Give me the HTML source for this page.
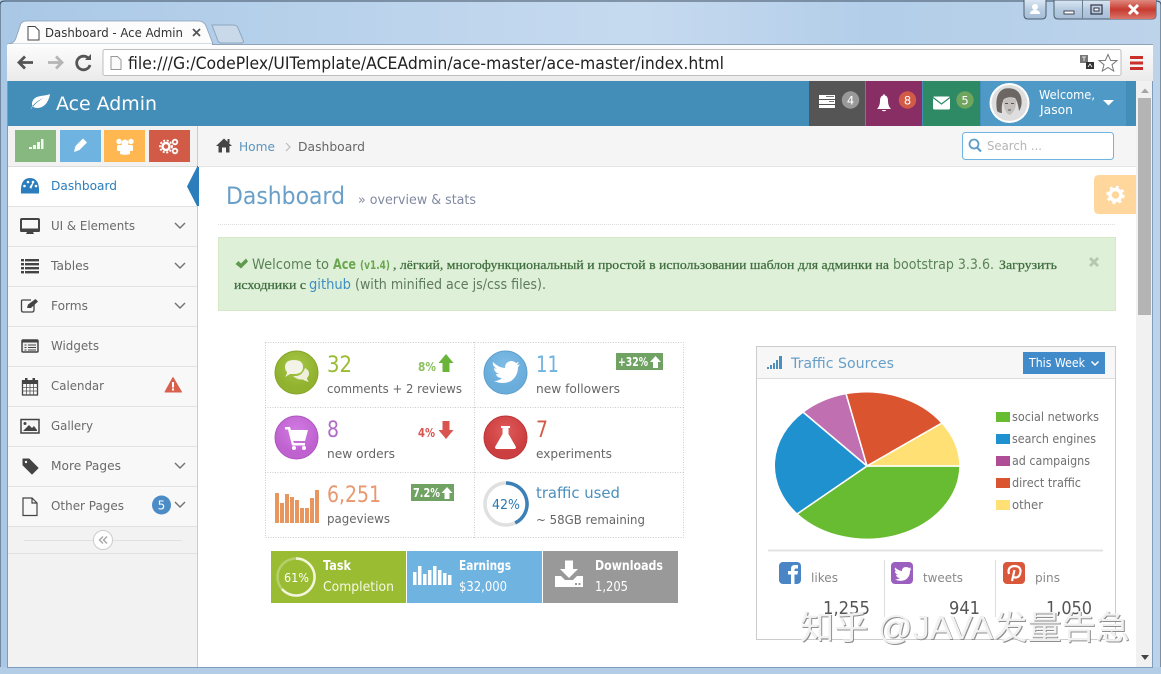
<!DOCTYPE html>
<html><head><meta charset="utf-8"><title>Dashboard - Ace Admin</title>
<style>
html,body{margin:0;padding:0;width:1161px;height:674px;overflow:hidden;background:#fff}
svg{display:block}
text{font-family:"DejaVu Sans","Liberation Sans",sans-serif;white-space:pre}
.s{font-family:"Liberation Serif","DejaVu Serif",serif;stroke:#3e6d3e;stroke-width:.25}
.nav{font-size:12.500px;fill:#6a6a6a}
.g{font-size:12.500px;fill:#666}
.w{fill:#fff}
.cn{font-family:"Liberation Sans","Noto Sans CJK SC",sans-serif}
</style></head><body>
<svg width="1161" height="674" viewBox="0 0 1161 674" xmlns="http://www.w3.org/2000/svg">
<defs>
<linearGradient id="sky" x1="0" y1="0" x2="1" y2="0"><stop offset="0" stop-color="#a9c8e6"/><stop offset=".35" stop-color="#bcd4ec"/><stop offset=".55" stop-color="#c6daef"/><stop offset=".75" stop-color="#b3cee9"/><stop offset="1" stop-color="#bcd3ea"/></linearGradient>
<linearGradient id="tb" x1="0" y1="0" x2="0" y2="1"><stop offset="0" stop-color="#fdfdfd"/><stop offset="1" stop-color="#e9e9e9"/></linearGradient>
<linearGradient id="cl" x1="0" y1="0" x2="0" y2="1"><stop offset="0" stop-color="#e08a80"/><stop offset=".5" stop-color="#c73a30"/><stop offset="1" stop-color="#d9756b"/></linearGradient>
<linearGradient id="btn" x1="0" y1="0" x2="0" y2="1"><stop offset="0" stop-color="#dbe7f3"/><stop offset=".5" stop-color="#b6cbe0"/><stop offset="1" stop-color="#a5bdd6"/></linearGradient>
<radialGradient id="g1" cy=".35"><stop offset="0" stop-color="#a6c748"/><stop offset="1" stop-color="#90b22e"/></radialGradient>
<radialGradient id="g2" cy=".35"><stop offset="0" stop-color="#7fbde6"/><stop offset="1" stop-color="#6aaddb"/></radialGradient>
<radialGradient id="g3" cy=".35"><stop offset="0" stop-color="#d27ce3"/><stop offset="1" stop-color="#bf62d0"/></radialGradient>
<radialGradient id="g4" cy=".35"><stop offset="0" stop-color="#e05a5a"/><stop offset="1" stop-color="#cc3f40"/></radialGradient>
<path id="chev" d="M-5 -3L0 2L5 -3" fill="none" stroke="#707070" stroke-width="1.400"/>
</defs>

<!-- window chrome -->
<rect width="1161" height="674" fill="url(#sky)"/>
<path d="M0 674V5Q0 1 5 1H1156Q1161 1 1161 5V674" fill="none" stroke="#3d4d5e" stroke-width="1"/>
<path d="M212 25L218 41Q219 43 222 43H240Q245 43 243 40L238 28Q237 25 233 25Z" fill="#c9d9ea" stroke="#8ea7c0"/>
<rect x="7" y="44" width="1146" height="40" fill="url(#tb)"/>
<rect x="212" y="44" width="941" height="1" fill="#8ea3b8"/>
<path d="M7 44Q14 44 16 38L20 26Q21 21 27 21H198Q204 21 206 26L213 44Z" fill="#fcfcfc" stroke="#8a9fb5" stroke-width=".8"/>
<rect x="8" y="44" width="204" height="3" fill="#fdfdfd"/>
<path d="M28 26.500h7l4 4v9.500h-11z" fill="#fff" stroke="#444"/>
<text x="45" y="37" font-size="12" fill="#333" textLength="138" lengthAdjust="spacingAndGlyphs">Dashboard - Ace Admin</text>
<path d="M193 29L200 36M200 29L193 36" stroke="#555" stroke-width="1.800"/>
<path d="M33 62.500H20M25 56.500L19 62.500L25 68.500" fill="none" stroke="#555" stroke-width="2.800"/>
<path d="M48 62.500H61M56 56.500L62 62.500L56 68.500" fill="none" stroke="#b5b5b5" stroke-width="2.800"/>
<path d="M89 59A6.800 6.800 0 1 0 90 65" fill="none" stroke="#555" stroke-width="2.800"/>
<path d="M85 60H91V54Z" fill="#555"/>
<rect x="103" y="49.500" width="1018" height="26" rx="2" fill="#fff" stroke="#bdbdbd"/>
<path d="M111 56.500h6.500l3.500 3.500v9.500h-10z" fill="#fafafa" stroke="#999"/>
<text x="128" y="69" font-size="16.500" fill="#222" textLength="596" lengthAdjust="spacingAndGlyphs">file:///G:/CodePlex/UITemplate/ACEAdmin/ace-master/ace-master/index.html</text>
<rect x="1080" y="55" width="8" height="8" fill="#777"/><rect x="1086" y="62" width="8" height="7" fill="#333"/>
<path d="M1082 57h4M1084 57v4" stroke="#fff" stroke-width=".8"/><path d="M1088 67l2-3 2 3" fill="none" stroke="#fff" stroke-width=".8"/>
<path d="M1108 54.500l2.700 6h6.300l-5 4.200 1.700 6.300-5.700-3.500-5.700 3.500 1.700-6.300-5-4.200h6.300z" fill="#fff" stroke="#777"/>
<rect x="1130" y="56" width="13" height="3" fill="#c9302c"/><rect x="1130" y="61.500" width="13" height="3" fill="#c9302c"/><rect x="1130" y="67" width="13" height="3" fill="#c9302c"/>
<path d="M1024 0V15Q1024 19 1028 19H1042Q1046 19 1046 15V0" fill="url(#btn)" stroke="#4c5d6e"/>
<circle cx="1035" cy="7" r="3" fill="#fff"/><path d="M1030 14Q1030 10 1035 10Q1040 10 1040 14Z" fill="#fff"/>
<path d="M1054 0V15Q1054 19 1058 19H1152Q1156 19 1156 15V0Z" fill="url(#btn)" stroke="#4c5d6e"/>
<path d="M1110 0H1156V15Q1156 19 1152 19H1110Z" fill="url(#cl)"/>
<line x1="1082.500" y1="0" x2="1082.500" y2="19" stroke="#6b7f93"/>
<rect x="1064" y="11" width="10" height="3" fill="#fff" stroke="#445"/>
<rect x="1091" y="5" width="11" height="9" fill="none" stroke="#334" stroke-width="1.200"/><rect x="1094" y="8" width="5" height="3" fill="#fff" stroke="#334"/>
<path d="M1129 5L1138 14M1138 5L1129 14" stroke="#fff" stroke-width="3"/>

<!-- page -->
<rect x="8" y="81" width="1145" height="586" fill="#fff"/>
<rect x="7" y="81" width="1" height="586" fill="#7e9dbd"/>
<rect x="1152" y="81" width="1" height="586" fill="#7e9dbd"/>
<rect x="0" y="667" width="1161" height="7" fill="#b3cde6"/>
<rect x="7" y="667" width="1146" height="1" fill="#7e9dbd"/>

<!-- navbar -->
<rect x="8" y="81" width="1128" height="45" fill="#438eb9"/>
<path d="M30 110C33 104 38 100 44 98C38 101 35 104 33 107C40 110 48 106 50 94C44 97 34 94 32 103C32 105 32 106 33 106Z" fill="#fff"/>
<text x="56" y="110" font-size="19" class="w" textLength="101" lengthAdjust="spacingAndGlyphs">Ace Admin</text>
<rect x="809" y="81" width="56" height="45" fill="#555"/>
<rect x="866" y="81" width="56" height="45" fill="#892e65"/>
<rect x="923" y="81" width="57" height="45" fill="#2e8965"/>
<rect x="981" y="81" width="145" height="45" fill="#4f99c6"/>
<rect x="819" y="95" width="16" height="4" fill="#fff"/><rect x="819" y="100" width="16" height="4" fill="#fff"/><rect x="819" y="105" width="16" height="3" fill="#fff"/>
<rect x="826" y="96" width="8" height="1" fill="#777"/><rect x="829" y="101" width="5" height="1" fill="#777"/>
<circle cx="850.500" cy="100" r="8.700" fill="#999"/><text x="850.500" y="104.500" font-size="11.500" text-anchor="middle" class="w">4</text>
<path d="M877 109Q880 106 880 101Q880 96 883 95.500V94.500H885V95.500Q888 96 888 101Q888 106 891 109ZM881.500 110H886.500Q884 112.500 881.500 110Z" fill="#fff"/>
<circle cx="907.500" cy="100" r="8.700" fill="#d15b47"/><text x="907.500" y="104.500" font-size="11.500" text-anchor="middle" class="w">8</text>
<rect x="933" y="96.500" width="17" height="13" rx="1.500" fill="#fff"/><path d="M933 97.500L941.500 104L950 97.500" fill="none" stroke="#2e8965" stroke-width="1.200"/>
<circle cx="965" cy="100" r="8.700" fill="#6fa55f"/><text x="965" y="104.500" font-size="11.500" text-anchor="middle" class="w">5</text>
<circle cx="1009.500" cy="103" r="20" fill="#fff"/><circle cx="1009.500" cy="103" r="18" fill="#dedede"/>
<path d="M997 111Q994 92 1005 88.500Q1018 87 1021 97Q1023 105 1019 111Q1018 102 1015 98Q1009 96 1004 99Q1001 104 1002 113Q999 113 997 111Z" fill="#6c6763"/>
<path d="M1003 100Q1009 96 1016 99Q1017 110 1010 115Q1004 113 1003 100Z" fill="#c4c0bd"/>
<path d="M1005 103.500h3M1011 103.500h3M1008 110h3" stroke="#555" stroke-width="1"/>
<text x="1039" y="99" font-size="12" fill="#fff" textLength="56" lengthAdjust="spacingAndGlyphs">Welcome,</text>
<text x="1040" y="114" font-size="12" fill="#fff" textLength="33" lengthAdjust="spacingAndGlyphs">Jason</text>
<path d="M1103 100H1114L1108.500 105.500Z" fill="#fff"/>

<!-- scrollbar -->
<rect x="1136" y="81" width="16" height="586" fill="#f1f1f1"/>
<path d="M1141 93L1145 88.500L1149 93Z" fill="#a5a5a5"/>
<rect x="1138" y="98" width="13" height="217" fill="#b4b4b4"/>
<path d="M1141 655L1145 660L1149 655Z" fill="#444"/>

<!-- sidebar -->
<rect x="8" y="126" width="189" height="541" fill="#f2f2f2"/>
<rect x="8" y="207" width="189" height="319" fill="#f8f8f8"/>
<rect x="197" y="126" width="1" height="541" fill="#ccc"/>
<rect x="15" y="130" width="41" height="32" fill="#87b87f"/>
<rect x="60" y="130" width="41" height="32" fill="#6fb3e0"/>
<rect x="104" y="130" width="41" height="32" fill="#ffb752"/>
<rect x="149" y="130" width="41" height="32" fill="#d15b47"/>
<path d="M29 147h3v2h-3zM33 145h3v4h-3zM37 142h3v7h-3zM41 139h2.500v10h-2.500z" fill="#fff" opacity=".9"/>
<path d="M74 152L75.500 146L83 138.500L87 142.500L79.500 150Z" fill="#fff"/>
<circle cx="125" cy="143" r="3.500" fill="#fff"/><circle cx="119" cy="141.500" r="2.700" fill="#fff"/><circle cx="131" cy="141.500" r="2.700" fill="#fff"/><path d="M117 150V146Q117 145 119 145H131Q133 145 133 146V150Q133 151 131 151H119Q117 151 117 150Z" fill="#fff"/><path d="M120 154V147H130V154Q125 155.500 120 154Z" fill="#fff"/>
<circle cx="166" cy="146.500" r="3.500" fill="none" stroke="#fff" stroke-width="2.500"/><circle cx="166" cy="146.500" r="6" fill="none" stroke="#fff" stroke-width="1.800" stroke-dasharray="2 1.600"/><circle cx="175" cy="142" r="2.300" fill="none" stroke="#fff" stroke-width="1.800"/><circle cx="175" cy="151" r="2.300" fill="none" stroke="#fff" stroke-width="1.800"/>
<rect x="8" y="166" width="189" height="1" fill="#ddd"/>
<rect x="8" y="167" width="190" height="39" fill="#fff"/>
<rect x="197" y="166" width="2" height="40" fill="#2b7dbc"/>
<path d="M197 167L187 186.500L197 206Z" fill="#2b7dbc"/>
<path d="M21 193.500Q20 178 30 178Q40 178 39 193.500Z" fill="#2b7dbc"/>
<circle cx="24.500" cy="186" r="1.300" fill="#fff"/><circle cx="28" cy="182" r="1.300" fill="#fff"/><circle cx="33" cy="182" r="1.300" fill="#fff"/><circle cx="36" cy="186" r="1.300" fill="#fff"/><path d="M30 187L33 183L31 188Z" fill="#fff" stroke="#fff"/>
<text x="51" y="190" font-size="12.500" fill="#2b7dbc" textLength="66" lengthAdjust="spacingAndGlyphs">Dashboard</text>
<g fill="#e2e2e2"><rect x="8" y="206" width="189" height="1"/><rect x="8" y="246" width="189" height="1"/><rect x="8" y="286" width="189" height="1"/><rect x="8" y="326" width="189" height="1"/><rect x="8" y="366" width="189" height="1"/><rect x="8" y="406" width="189" height="1"/><rect x="8" y="446" width="189" height="1"/><rect x="8" y="486" width="189" height="1"/><rect x="8" y="526" width="189" height="1"/><rect x="8" y="553" width="189" height="1"/></g>
<text x="51" y="230" class="nav" textLength="84" lengthAdjust="spacingAndGlyphs">UI &amp; Elements</text>
<text x="51" y="270" class="nav" textLength="38" lengthAdjust="spacingAndGlyphs">Tables</text>
<text x="51" y="310" class="nav" textLength="37" lengthAdjust="spacingAndGlyphs">Forms</text>
<text x="51" y="350" class="nav" textLength="48" lengthAdjust="spacingAndGlyphs">Widgets</text>
<text x="51" y="390" class="nav" textLength="53" lengthAdjust="spacingAndGlyphs">Calendar</text>
<text x="51" y="430" class="nav" textLength="42" lengthAdjust="spacingAndGlyphs">Gallery</text>
<text x="51" y="470" class="nav" textLength="70" lengthAdjust="spacingAndGlyphs">More Pages</text>
<text x="51" y="510" class="nav" textLength="73" lengthAdjust="spacingAndGlyphs">Other Pages</text>
<use href="#chev" x="180" y="226"/><use href="#chev" x="180" y="266"/><use href="#chev" x="180" y="306"/><use href="#chev" x="180" y="466"/><use href="#chev" x="180" y="505"/>
<!-- desktop -->
<path d="M22 218H38Q40 218 40 220V231Q40 232 38 232H22Q20 232 20 231V220Q20 218 22 218Z" fill="#444"/><rect x="22" y="220" width="16" height="8.500" fill="#f8f8f8"/><path d="M27 232H33L34 234H26Z" fill="#444"/>
<!-- tables -->
<g fill="#444"><rect x="21" y="259" width="3" height="2.400"/><rect x="25" y="259" width="14" height="2.400"/><rect x="21" y="263" width="3" height="2.400"/><rect x="25" y="263" width="14" height="2.400"/><rect x="21" y="267" width="3" height="2.400"/><rect x="25" y="267" width="14" height="2.400"/><rect x="21" y="271" width="3" height="2.400"/><rect x="25" y="271" width="14" height="2.400"/></g>
<!-- forms -->
<path d="M34 304V310Q34 312 32 312H23Q21.500 312 21.500 310V301Q21.500 300 23 300H31" fill="none" stroke="#444" stroke-width="1.300"/><path d="M27 308L28 304.500L35.500 299L38 301.500L31 308Z" fill="#444"/>
<!-- widgets -->
<rect x="22" y="340" width="16" height="12" rx="1" fill="#eee" stroke="#444" stroke-width="1.500"/><rect x="22" y="340" width="16" height="2.500" fill="#444"/><path d="M24.500 345h2M24.500 347.500h2M24.500 350h2M28 345h8M28 347.500h8M28 350h8" stroke="#444"/>
<!-- calendar -->
<rect x="22.500" y="381" width="15" height="14" fill="#f8f8f8" stroke="#444" stroke-width="1.300"/><rect x="22" y="380" width="16" height="4" fill="#444"/><rect x="25" y="378" width="2.500" height="4" fill="#444"/><rect x="32.500" y="378" width="2.500" height="4" fill="#444"/><path d="M22 387.500H38M22 391H38M26.500 384V395M30 384V395M33.500 384V395" stroke="#555" stroke-width=".8"/>
<path d="M173 377.500L181.500 392H165Z" fill="#d9604c" stroke="#d9604c" stroke-linejoin="round"/><rect x="172" y="382" width="2" height="5.500" fill="#fff"/><rect x="172" y="388.500" width="2" height="2" fill="#fff"/>
<!-- gallery -->
<rect x="21" y="419.500" width="18" height="13.500" fill="#f5f5f5" stroke="#444" stroke-width="1.500"/><path d="M23 431L29 425L32 428L34 426L37 430V431Z" fill="#444"/><circle cx="25" cy="423.500" r="1.500" fill="#444"/>
<!-- tag -->
<path d="M23 459H29L38 468L32 474L23 465Z" fill="#444" stroke="#444" stroke-linejoin="round"/><circle cx="26" cy="462" r="1.200" fill="#f8f8f8"/>
<!-- page -->
<path d="M23 498h9l5 5v12.500h-14z" fill="#f8f8f8" stroke="#444" stroke-width="1.200"/><path d="M32 498v5h5" fill="none" stroke="#444" stroke-width="1.200"/>
<circle cx="161.500" cy="505" r="9.500" fill="#4b8bc6"/><text x="161.500" y="509.500" font-size="12" class="w" text-anchor="middle">5</text>
<rect x="24" y="540" width="158" height="1" fill="#e0e0e0"/>
<circle cx="103" cy="540" r="9.500" fill="#fff" stroke="#ccc"/>
<path d="M103 536.500L99.500 540L103 543.500M107 536.500L103.500 540L107 543.500" fill="none" stroke="#aaa" stroke-width="1.500"/>

<!-- breadcrumbs -->
<rect x="198" y="126" width="938" height="40" fill="#f5f5f5"/>
<rect x="198" y="166" width="938" height="1" fill="#e5e5e5"/>
<path d="M216 146L224 138.500L232 146H229.500V152.500H226V147.500H222V152.500H218.500V146Z" fill="#444"/><rect x="227.500" y="139" width="2" height="4" fill="#444"/>
<text x="239" y="151" font-size="12.500" fill="#5c94bd" textLength="36" lengthAdjust="spacingAndGlyphs">Home</text>
<path d="M286 143L290 147L286 151" fill="none" stroke="#bbb" stroke-width="1.200"/>
<text x="298" y="151" font-size="12.500" fill="#666" textLength="67" lengthAdjust="spacingAndGlyphs">Dashboard</text>
<rect x="962.500" y="132.500" width="151" height="27" rx="3" fill="#fff" stroke="#6fb3e0"/>
<circle cx="974" cy="144" r="4.500" fill="none" stroke="#5f9ec9" stroke-width="1.800"/><path d="M977 147.500L981 151.500" stroke="#5f9ec9" stroke-width="2.200"/>
<text x="987" y="150" font-size="12" fill="#b5b5b5" textLength="55" lengthAdjust="spacingAndGlyphs">Search ...</text>

<!-- settings -->
<path d="M1136 175H1099Q1094 175 1094 180V209Q1094 214 1099 214H1136Z" fill="#ffd69c"/>
<circle cx="1115.500" cy="195" r="5.500" fill="none" stroke="#fff" stroke-width="3.500"/><circle cx="1115.500" cy="195" r="8" fill="none" stroke="#fff" stroke-width="2.500" stroke-dasharray="3 3.300"/>

<!-- header -->
<text x="226" y="204" font-size="24" fill="#6aa0c8" textLength="119" lengthAdjust="spacingAndGlyphs">Dashboard</text>
<text x="358" y="204" font-size="13.500" fill="#8089a0" textLength="118" lengthAdjust="spacingAndGlyphs">» overview &amp; stats</text>
<line x1="218" y1="224.500" x2="1116" y2="224.500" stroke="#ddd" stroke-dasharray="1 1"/>

<!-- alert -->
<rect x="218.500" y="237.500" width="897" height="73" fill="#dff0d8" stroke="#d6e9c6"/>
<path d="M235.500 264L238.500 261L241 263.500L246 258.500L248 261.500L241 268.500Z" fill="#5f9a4f"/>
<g font-size="14" fill="#5a8257">
<text x="252" y="269" textLength="77" lengthAdjust="spacingAndGlyphs">Welcome to</text>
<text x="333" y="269" font-weight="bold" font-size="14" fill="#69a64f" textLength="23" lengthAdjust="spacingAndGlyphs">Ace</text>
<text x="360" y="269" font-size="11.500" font-weight="bold" fill="#69a64f" textLength="30" lengthAdjust="spacingAndGlyphs">(v1.4)</text>
<text x="893" y="269" textLength="101" lengthAdjust="spacingAndGlyphs">bootstrap 3.3.6.</text>
<text x="355" y="289" fill="#5e7a5c" textLength="191" lengthAdjust="spacingAndGlyphs">(with minified ace js/css files).</text>
<text x="309" y="289" fill="#3f8ec2" textLength="42" lengthAdjust="spacingAndGlyphs">github</text>
</g>
<text x="393" y="269" class="s" font-size="13" fill="#3e6d3e" textLength="496" lengthAdjust="spacingAndGlyphs">, лёгкий, многофункциональный и простой в использовании шаблон для админки на</text>
<text x="999" y="269" class="s" font-size="13" fill="#3e6d3e" textLength="58" lengthAdjust="spacingAndGlyphs">Загрузить</text>
<text x="234" y="289" class="s" font-size="13" fill="#3e6d3e" textLength="72" lengthAdjust="spacingAndGlyphs">исходники с</text>
<path d="M1090 258L1098 266M1098 258L1090 266" stroke="#b4c8ab" stroke-width="2.800"/>

<!-- infoboxes -->
<g fill="none" stroke="#ccc" stroke-dasharray="1 1.500">
<rect x="265.500" y="342.500" width="418" height="195"/>
<line x1="474.500" y1="342" x2="474.500" y2="538"/>
<line x1="265" y1="407.500" x2="684" y2="407.500"/>
<line x1="265" y1="472.500" x2="684" y2="472.500"/>
</g>
<circle cx="296.500" cy="372.500" r="21.500" fill="url(#g1)" stroke="#86a52b"/>
<path d="M285 367Q285 360 294 360Q303 360 303 367Q303 374 294 374Q292 374 290 374L285 377Q287 374 287 372Q285 370 285 367Z" fill="#f3f3e8"/>
<path d="M305 368Q309 370 309 373.500Q309 376 307 378Q307 380 309 382Q305 381 303 379.500Q297 380 293 376Q302 377 305 368Z" fill="#eef0dc"/>
<circle cx="505.500" cy="372.500" r="21.500" fill="url(#g2)" stroke="#5f9fcd"/>
<path d="M493 362Q499 368 505 368Q505 362 511 361Q514 361 516 363L519 362L517 365L520 364.500L518 367Q518 376 511 381Q503 385 494 381Q499 381 502 378Q497 378 496 374H499Q494 372 494 368L497 369Q492 366 493 362Z" fill="#fff"/>
<circle cx="296.500" cy="437.500" r="21.500" fill="url(#g3)" stroke="#ae56bf"/>
<path d="M285 427H290L291 430H308L305 441H293L294 443H305V445.500H292L288 429.500H285Z" fill="#fff"/><circle cx="294" cy="448" r="2" fill="#fff"/><circle cx="304" cy="448" r="2" fill="#fff"/>
<circle cx="505.500" cy="437.500" r="21.500" fill="url(#g4)" stroke="#bb3536"/>
<path d="M501 426H510V428H508.500V434L516 447Q516 449 514 449H497Q495 449 495 447L502.500 434V428H501Z" fill="#fff"/>

<g font-size="22">
<text x="327" y="372" fill="#9abc32" textLength="25" lengthAdjust="spacingAndGlyphs">32</text>
<text x="536" y="372" fill="#6fb3e0" textLength="23" lengthAdjust="spacingAndGlyphs">11</text>
<text x="327" y="437" fill="#b06cc7" textLength="12" lengthAdjust="spacingAndGlyphs">8</text>
<text x="536" y="437" fill="#d15b47" textLength="12" lengthAdjust="spacingAndGlyphs">7</text>
<text x="327" y="502" fill="#e9976f" textLength="54" lengthAdjust="spacingAndGlyphs">6,251</text>
</g>
<text x="327" y="393" class="g" textLength="135" lengthAdjust="spacingAndGlyphs">comments + 2 reviews</text>
<text x="536" y="393" class="g" textLength="84" lengthAdjust="spacingAndGlyphs">new followers</text>
<text x="327" y="458" class="g" textLength="68" lengthAdjust="spacingAndGlyphs">new orders</text>
<text x="536" y="458" class="g" textLength="76" lengthAdjust="spacingAndGlyphs">experiments</text>
<text x="327" y="523" class="g" textLength="63" lengthAdjust="spacingAndGlyphs">pageviews</text>
<text x="536" y="524" class="g" textLength="109" lengthAdjust="spacingAndGlyphs">~ 58GB remaining</text>
<text x="536" y="498" font-size="15.500" fill="#4c8fbd" textLength="84" lengthAdjust="spacingAndGlyphs">traffic used</text>
<text x="418" y="371" font-size="12.500" font-weight="bold" fill="#8ac05f" textLength="18" lengthAdjust="spacingAndGlyphs">8%</text>
<path d="M446 354L453.500 363H449.500V372H442.500V363H438.500Z" fill="#69b53a"/>
<text x="418" y="437" font-size="12.500" font-weight="bold" fill="#d9534f" textLength="17" lengthAdjust="spacingAndGlyphs">4%</text>
<path d="M446 439L453.500 430H449.500V421H442.500V430H438.500Z" fill="#d9534f"/>
<rect x="616" y="353" width="47" height="17" fill="#6fa263"/>
<text x="618" y="366" font-size="12" font-weight="bold" class="w" textLength="30" lengthAdjust="spacingAndGlyphs">+32%</text>
<path d="M655.500 356L661 362H658V368H653V362H650Z" fill="#fff"/>
<rect x="411" y="484" width="43" height="17" fill="#6fa263"/>
<text x="413" y="497" font-size="12" font-weight="bold" class="w" textLength="27" lengthAdjust="spacingAndGlyphs">7.2%</text>
<path d="M447 487L452.500 493H449.500V499H444.500V493H441.500Z" fill="#fff"/>
<g fill="#e8955e">
<rect x="275" y="493" width="4" height="30"/><rect x="280" y="503" width="4" height="20"/><rect x="285" y="494" width="4" height="29"/><rect x="290" y="497" width="4" height="26"/><rect x="295" y="500" width="4" height="23"/><rect x="300" y="508" width="4" height="15"/><rect x="305" y="508" width="4" height="15"/><rect x="310" y="498" width="4" height="25"/><rect x="315" y="490" width="4" height="33"/>
</g>
<circle cx="506" cy="504" r="21" fill="none" stroke="#e0e0e0" stroke-width="3.500"/>
<path d="M506 483A21 21 0 0 1 515.200 522.900" fill="none" stroke="#3c80b8" stroke-width="3.500"/>
<text x="506" y="509" font-size="13.500" fill="#2a7ab0" text-anchor="middle" textLength="28" lengthAdjust="spacingAndGlyphs">42%</text>

<!-- big buttons -->
<rect x="271" y="551" width="135" height="52" fill="#9abc32"/>
<rect x="407" y="551" width="135" height="52" fill="#6fb3e0"/>
<rect x="543" y="551" width="135" height="52" fill="#999"/>
<circle cx="296" cy="577" r="18.500" fill="none" stroke="#b5cf6a" stroke-width="2.500"/>
<path d="M296 558.500A18.500 18.500 0 1 1 282 589" fill="none" stroke="#f3f6dd" stroke-width="2.500"/>
<text x="284" y="582" font-size="12" class="w" textLength="25" lengthAdjust="spacingAndGlyphs">61%</text>
<text x="323" y="570" font-size="13.500" font-weight="bold" class="w" textLength="28" lengthAdjust="spacingAndGlyphs">Task</text>
<text x="323" y="591" font-size="13" fill="#f5f8e5" textLength="71" lengthAdjust="spacingAndGlyphs">Completion</text>
<g fill="#fff">
<rect x="413" y="572" width="3.500" height="13"/><rect x="418" y="566" width="3.500" height="19"/><rect x="423" y="574" width="3.500" height="11"/><rect x="428" y="570" width="3.500" height="15"/><rect x="433" y="566" width="3.500" height="19"/><rect x="438" y="570" width="3.500" height="15"/><rect x="443" y="573" width="3.500" height="12"/><rect x="448" y="575" width="3.500" height="10"/>
</g>
<text x="459" y="570" font-size="13.500" font-weight="bold" class="w" textLength="52" lengthAdjust="spacingAndGlyphs">Earnings</text>
<text x="459" y="591" font-size="13" class="w" textLength="48" lengthAdjust="spacingAndGlyphs">$32,000</text>
<path d="M565 560.500H573V569H578L569 578L560 569H565Z" fill="#fff"/>
<path d="M555 576H561L565 580H573L577 576H583V587H555Z" fill="#fff"/>
<rect x="575" y="583" width="2" height="2" fill="#999"/><rect x="578.500" y="583" width="2" height="2" fill="#999"/>
<text x="595" y="570" font-size="13.500" font-weight="bold" class="w" textLength="68" lengthAdjust="spacingAndGlyphs">Downloads</text>
<text x="595" y="591" font-size="13" class="w" textLength="33" lengthAdjust="spacingAndGlyphs">1,205</text>

<!-- widget -->
<rect x="756.500" y="346.500" width="359" height="293" fill="#fff" stroke="#ccc"/>
<rect x="757" y="347" width="358" height="31" fill="#f7f7f7"/>
<rect x="757" y="378" width="358" height="1" fill="#ddd"/>
<g fill="#4c8fbd"><rect x="767" y="367" width="2" height="2"/><rect x="770" y="365" width="2" height="4"/><rect x="773" y="363" width="2" height="6"/><rect x="776" y="360" width="2" height="9"/><rect x="779" y="356" width="3" height="13"/></g>
<text x="791" y="368" font-size="14.500" fill="#669fc7" textLength="103" lengthAdjust="spacingAndGlyphs">Traffic Sources</text>
<rect x="1023" y="352" width="82" height="22" fill="#428bca"/>
<text x="1029" y="367" font-size="12.500" class="w" textLength="56" lengthAdjust="spacingAndGlyphs">This Week</text>
<path d="M1091.500 361.500L1095 365L1098.500 361.500" fill="none" stroke="#fff" stroke-width="1.500"/>
<g stroke="#fff" stroke-width="1.500" stroke-linejoin="round">
<path d="M867 466L960 466A93 74 0 0 1 797 514Z" fill="#68bc31"/>
<path d="M867 466L797 514A93 74 0 0 1 803 412Z" fill="#2091cf"/>
<path d="M867 466L803 412A93 74 0 0 1 846 393.500Z" fill="#c06fb0"/>
<path d="M867 466L846 393.500A93 74 0 0 1 942 423Z" fill="#da5430"/>
<path d="M867 466L942 423A93 74 0 0 1 960 466Z" fill="#fee074"/>
</g>
<rect x="996" y="412" width="14" height="10" fill="#68bc31"/>
<rect x="996" y="434" width="14" height="10" fill="#2091cf"/>
<rect x="996" y="456" width="14" height="10" fill="#af4e96"/>
<rect x="996" y="478" width="14" height="10" fill="#da5430"/>
<rect x="996" y="500" width="14" height="10" fill="#fee074"/>
<text x="1012" y="421" font-size="12" fill="#707070" textLength="87" lengthAdjust="spacingAndGlyphs">social networks</text>
<text x="1012" y="443" font-size="12" fill="#707070" textLength="84" lengthAdjust="spacingAndGlyphs">search engines</text>
<text x="1012" y="465" font-size="12" fill="#707070" textLength="78" lengthAdjust="spacingAndGlyphs">ad campaigns</text>
<text x="1012" y="487" font-size="12" fill="#707070" textLength="69" lengthAdjust="spacingAndGlyphs">direct traffic</text>
<text x="1012" y="509" font-size="12" fill="#707070" textLength="31" lengthAdjust="spacingAndGlyphs">other</text>
<rect x="768" y="549.500" width="335" height="2" fill="#e3e3e3"/>
<rect x="884" y="560" width="1" height="57" fill="#ddd"/><rect x="995" y="560" width="1" height="57" fill="#ddd"/>
<rect x="779" y="562" width="22" height="22" rx="4" fill="#4a85c5"/>
<path d="M791 584V574.500H788V571H791V568.500Q791 565 795 565H798V568.500H796Q794.500 568.500 794.500 570V571H798L797.500 574.500H794.500V584Z" fill="#fff"/>
<rect x="891" y="562" width="22" height="22" rx="4" fill="#9b5fc0"/>
<path d="M895 567.500Q899 571 902 571Q902 567 906 567Q908 567 909 568L911 567.500L910 569.500L911.500 569L910 571Q910 577 905 580Q900 582 895 579.500Q898 579.500 900 578Q897 578 896 575H898Q895 574 895 571L897 571.500Q894 570 895 567.500Z" fill="#fff"/>
<rect x="1003" y="562" width="22" height="22" rx="4" fill="#d9583b"/>
<path d="M1012 581L1014.500 570M1009 574Q1007 567 1014 566Q1021 566 1020.500 572Q1019.500 578 1015 577.500Q1013 577 1013 576" fill="none" stroke="#fff" stroke-width="2.200"/>
<text x="811" y="582" font-size="12.500" fill="#888" textLength="27" lengthAdjust="spacingAndGlyphs">likes</text>
<text x="923" y="582" font-size="12.500" fill="#888" textLength="40" lengthAdjust="spacingAndGlyphs">tweets</text>
<text x="1035" y="582" font-size="12.500" fill="#888" textLength="25" lengthAdjust="spacingAndGlyphs">pins</text>
<text x="823" y="614" font-size="18" fill="#555" textLength="47" lengthAdjust="spacingAndGlyphs">1,255</text>
<text x="949" y="614" font-size="18" fill="#555" textLength="31" lengthAdjust="spacingAndGlyphs">941</text>
<text x="1046" y="614" font-size="18" fill="#555" textLength="46" lengthAdjust="spacingAndGlyphs">1,050</text>

<!-- watermark -->
<g font-size="33">
<text class="cn" x="801" y="640" fill="#8f8f8f" textLength="330" lengthAdjust="spacingAndGlyphs">知乎 @JAVA发量告急</text>
<text class="cn" x="800" y="639" fill="#f1f1f1" textLength="330" lengthAdjust="spacingAndGlyphs">知乎 @JAVA发量告急</text>
</g>
</svg>
</body></html>
